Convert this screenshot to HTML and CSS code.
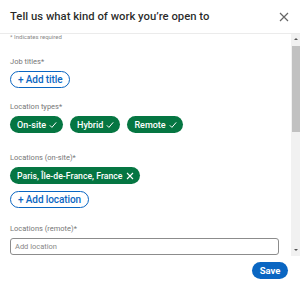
FILE: index.html
```html
<!DOCTYPE html>
<html>
<head>
<meta charset="utf-8">
<link rel="stylesheet" href="styles.css">
</head>
<body>
<div class="modal">
  <header class="head">
    <h2 class="title">Tell us what kind of work you’re open to</h2>
    <button class="close" aria-label="Dismiss">
      <svg width="10" height="10" viewBox="0 0 10 10"><path d="M1 1L9 9M9 1L1 9" stroke="#666" stroke-width="1.2" fill="none"/></svg>
    </button>
  </header>
  <div class="scrollwrap">
    <div class="content">
      <p class="req">* Indicates required</p>
      <div class="field f-job">
        <div class="label">Job titles*</div>
        <div class="row"><button class="outline">+ Add title</button></div>
      </div>
      <div class="field f-types">
        <div class="label">Location types*</div>
        <div class="row">
          <span class="chip">On-site <svg class="ic" width="8" height="8" viewBox="0 0 8 8"><path d="M0.8 4.3L2.9 6.4L7.2 1.4" stroke="#fff" stroke-width="1" fill="none"/></svg></span>
          <span class="chip">Hybrid <svg class="ic" width="8" height="8" viewBox="0 0 8 8"><path d="M0.8 4.3L2.9 6.4L7.2 1.4" stroke="#fff" stroke-width="1" fill="none"/></svg></span>
          <span class="chip">Remote <svg class="ic" width="8" height="8" viewBox="0 0 8 8"><path d="M0.8 4.3L2.9 6.4L7.2 1.4" stroke="#fff" stroke-width="1" fill="none"/></svg></span>
        </div>
      </div>
      <div class="field f-onsite">
        <div class="label">Locations (on-site)*</div>
        <div class="row"><span class="chip chip-loc">Paris, Île-de-France, France <svg class="ic" width="8" height="8" viewBox="0 0 8 8"><path d="M1 1L7 7M7 1L1 7" stroke="#fff" stroke-width="1.1" fill="none"/></svg></span></div>
        <div class="row"><button class="outline">+ Add location</button></div>
      </div>
      <div class="field f-remote">
        <div class="label">Locations (remote)*</div>
        <div class="input">Add location</div>
      </div>
    </div>
    <div class="scrollbar">
      <div class="arrow up"></div>
      <div class="thumb"></div>
      <div class="track-rest"></div>
      <div class="arrow down"></div>
    </div>
  </div>
  <footer class="foot">
    <button class="save">Save</button>
  </footer>
</div>
</body>
</html>
```

FILE: styles.css
```css
* { box-sizing: border-box; }
html, body { margin: 0; padding: 0; background: #fff; }
body { width: 300px; height: 284px; overflow: hidden; font-family: Roboto, "Noto Sans", sans-serif; color: rgba(0,0,0,0.9); }
.modal { display: flex; flex-direction: column; height: 284px; }
.head { height: 34px; flex: none; display: flex; align-items: center; justify-content: space-between; padding: 0 10px 0 10px; border-bottom: 1px solid #ebebeb; }
.title { margin: 0; font-size: 11.3px; font-weight: 500; color: rgba(0,0,0,0.85); }
.close { border: 0; background: none; padding: 0; width: 16px; height: 16px; display: flex; align-items: center; justify-content: center; margin-right: -2px; }
.scrollwrap { flex: 1; display: flex; overflow: hidden; min-height: 0; }
.content { flex: 1; padding: 0 12px 0 10px; overflow: hidden; }
.req { margin: 0; font-size: 6px; color: #8a8a8a; line-height: 8px; margin-top: -1px; }
.field { margin-top: 16px; }
.f-job { margin-top: 16px; }
.f-types { margin-top: 14px; }
.f-onsite { margin-top: 20px; }
.label { font-size: 7.5px; color: #777; line-height: 10px; margin-bottom: 4px; }
.row { display: flex; gap: 7px; }
.row + .row { margin-top: 7px; }
.outline { font-family: inherit; font-size: 10px; font-weight: 500; color: #0a66c2; background: #fff; border: 1px solid #0a66c2; border-radius: 10px; height: 17px; padding: 0 7px; line-height: 15px; letter-spacing: -0.1px; }
.chip { display: inline-flex; align-items: center; gap: 3px; height: 17px; padding: 0 6px 0 7px; border-radius: 10px; background: #057642; color: #fff; font-size: 9px; font-weight: 500; }
.chip-loc { font-size: 8.7px; }
.ic { flex: none; }
.input { height: 17px; border: 1px solid #8c8c8c; border-radius: 3px; font-size: 7.5px; color: #888; padding: 0 4px; line-height: 15px; }
.scrollbar { width: 9px; flex: none; background: #f1f1f1; display: flex; flex-direction: column; }
.arrow { height: 12px; flex: none; position: relative; }
.arrow::after { content: ""; position: absolute; left: 3px; top: 4px; border-left: 2px solid transparent; border-right: 2px solid transparent; }
.up::after { border-bottom: 2px solid #555; }
.down::after { border-top: 2px solid #555; top: 5px; }
.thumb { height: 86px; margin-left: 1px; background: #c1c1c1; flex: none; }
.track-rest { flex: 1; }
.foot { height: 28px; flex: none; display: flex; align-items: center; justify-content: flex-end; padding: 0 12px 0 0; }
.save { font-family: inherit; font-size: 9.5px; font-weight: 700; color: #fff; background: #0a66c2; border: 0; border-radius: 9px; height: 17px; width: 36px; padding: 0; }
```
